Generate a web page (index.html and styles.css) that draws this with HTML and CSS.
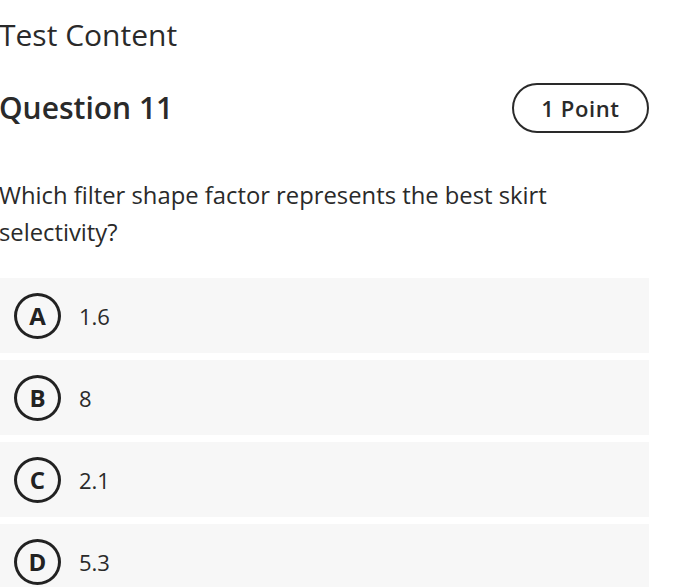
FILE: index.html
```html
<!DOCTYPE html>
<html lang="en">
<head>
<meta charset="utf-8">
<title>Test Content</title>
<link rel="stylesheet" href="styles.css">
</head>
<body>
<main class="page">
  <h1 class="title">Test Content</h1>
  <div class="q-head">
    <h2 class="q-num">Question 11</h2>
    <span class="points">1 Point</span>
  </div>
  <p class="q-text">Which filter shape factor represents the best skirt selectivity?</p>
  <ul class="options">
    <li class="option"><span class="letter">A</span><span class="answer">1.6</span></li>
    <li class="option"><span class="letter">B</span><span class="answer">8</span></li>
    <li class="option"><span class="letter">C</span><span class="answer">2.1</span></li>
    <li class="option"><span class="letter">D</span><span class="answer">5.3</span></li>
  </ul>
</main>
</body>
</html>
```

FILE: styles.css
```css
html, body {
  margin: 0;
  padding: 0;
  background: #ffffff;
}

body {
  font-family: "Open Sans", "Noto Sans", sans-serif;
  color: #2a2a2a;
}

.page {
  width: 650px;
  margin-left: -1px;
  padding-top: 15px;
}

.title {
  margin: 0;
  font-size: 30px;
  font-weight: 400;
  line-height: 40px;
}

.q-head {
  display: flex;
  align-items: center;
  justify-content: space-between;
  margin-top: 28px;
  height: 50px;
}

.q-num {
  margin: 0;
  font-size: 30px;
  font-weight: 600;
  line-height: 50px;
}

.points {
  box-sizing: border-box;
  width: 137px;
  height: 50px;
  border: 2px solid #2a2a2a;
  border-radius: 25px;
  display: flex;
  align-items: center;
  justify-content: center;
  font-size: 22px;
  font-weight: 600;
  letter-spacing: 0.6px;
}

.q-text {
  margin: 44px 0 0;
  font-size: 23.8px;
  line-height: 37px;
  font-weight: 400;
}

.options {
  list-style: none;
  margin: 27px 0 0;
  padding: 0;
  display: flex;
  flex-direction: column;
  gap: 7px;
}

.option {
  height: 75px;
  background: #f7f7f7;
  display: flex;
  align-items: center;
  padding-left: 15px;
  gap: 18px;
}

.letter {
  box-sizing: border-box;
  width: 47px;
  height: 46px;
  border: 3px solid #222222;
  border-radius: 50%;
  display: flex;
  align-items: center;
  justify-content: center;
  font-size: 24px;
  font-weight: 700;
  color: #222222;
}

.answer {
  font-size: 22px;
  font-weight: 400;
}
```
